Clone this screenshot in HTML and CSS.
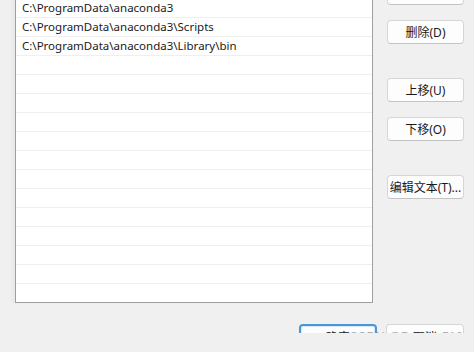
FILE: index.html
```html
<!DOCTYPE html>
<html lang="zh-CN">
<head>
  <meta charset="UTF-8" />
  <meta name="viewport" content="width=device-width, initial-scale=1" />
  <title>编辑环境变量</title>
  <link rel="stylesheet" href="styles.css">
</head>
<body>
  <div class="dialog">
    <div class="main">
      <div class="pathList">
        <div class="row">C:\ProgramData\anaconda3</div>
        <div class="row">C:\ProgramData\anaconda3\Scripts</div>
        <div class="row">C:\ProgramData\anaconda3\Library\bin</div>
        <div class="row"></div>
        <div class="row"></div>
        <div class="row"></div>
        <div class="row"></div>
        <div class="row"></div>
        <div class="row"></div>
        <div class="row"></div>
        <div class="row"></div>
        <div class="row"></div>
        <div class="row"></div>
        <div class="row"></div>
        <div class="row"></div>
        <div class="row"></div>
      </div>

      <div class="sideButtons">
        <button class="btn">浏览(B)...</button>
        <button class="btn">删除(D)</button>
        <button class="btn groupStart">上移(U)</button>
        <button class="btn">下移(O)</button>
        <button class="btn groupStart">编辑文本(T)...</button>
      </div>
    </div>

    <div class="footer">
      <button class="btn big primary">确定</button>
      <button class="btn big">取消</button>
      <div class="watermark">CSDN @Do<span class="hidden"></span>510</div>
    </div>
  </div>
</body>
</html>
```

FILE: styles.css
```css
* {
  box-sizing: border-box;
}

body {
  margin: 0;
  background: #f0f0f0;
  font-family: 'Noto Sans', 'Noto Sans CJK SC', sans-serif;
  font-size: 12px;
  color: #1a1a1a;
  overflow: hidden;
}

.dialog {
  width: 474px;
  height: 352px;
  position: relative;
}

.main {
  display: flex;
  align-items: flex-start;
  margin-top: -19px;
}

.pathList {
  margin-top: 17px;
  margin-left: 15px;
  width: 358px;
  background: #fff;
  border: 1px solid #a0a0a0;
  box-shadow: -3px 0 3px rgba(0, 0, 0, 0.03);
}

.row {
  height: 19px;
  line-height: 18px;
  padding-left: 6px;
  border-bottom: 1px solid #efefef;
  font-size: 11.5px;
  white-space: nowrap;
}

.row:last-child {
  height: 18px;
  border-bottom: none;
}

.sideButtons {
  display: flex;
  flex-direction: column;
  gap: 15px;
  margin-left: 14px;
  width: 77px;
}

.sideButtons .groupStart {
  margin-top: 19px;
}

.btn {
  height: 24px;
  width: 77px;
  padding: 0;
  background: #fdfdfd;
  border: 1px solid #d6d6d6;
  border-bottom-color: #c4c4c4;
  border-radius: 4px;
  font-family: 'Noto Sans', 'Noto Sans CJK SC', sans-serif;
  font-size: 12px;
  color: #1a1a1a;
  white-space: nowrap;
}

.footer {
  display: flex;
  justify-content: flex-end;
  gap: 9px;
  padding-right: 10px;
  margin-top: 21px;
  position: relative;
}

.btn.big {
  height: 26px;
  width: 78px;
}

.btn.primary {
  border: 2px solid #4b95dc;
  box-shadow: inset 0 0 0 1px #d9e9f8;
}

.watermark {
  position: absolute;
  left: 349px;
  top: 5px;
  font-family: 'Liberation Sans', sans-serif;
  font-size: 13px;
  letter-spacing: -0.3px;
  color: rgba(150, 150, 150, 0.75);
  pointer-events: none;
  white-space: nowrap;
}

.watermark .hidden {
  display: inline-block;
  width: 25px;
}
```
